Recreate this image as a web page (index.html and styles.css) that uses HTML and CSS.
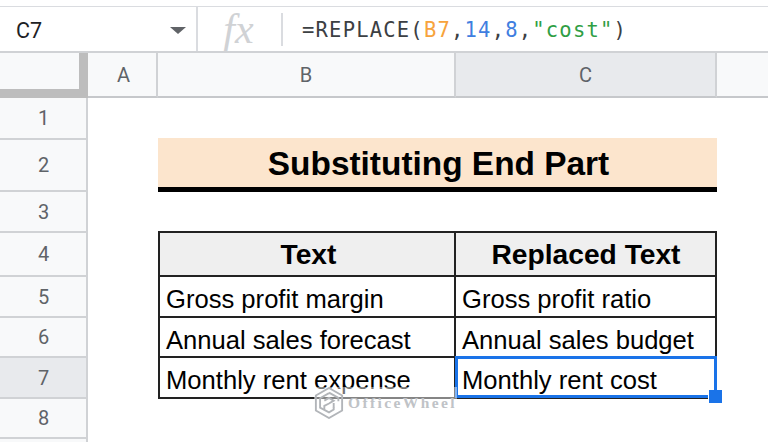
FILE: index.html
```html
<!DOCTYPE html>
<html lang="en">
<head>
<meta charset="utf-8">
<title>Substituting End Part</title>
<link rel="stylesheet" href="styles.css">
</head>
<body>
<div class="topstrip"></div>
<div class="fbar">
  <div class="namebox"><span class="cellname">C7</span><span class="caret"></span></div>
  <div class="fxwrap"><span class="fx">fx</span></div>
  <div class="formula">=REPLACE(<span class="c-ref">B7</span>,<span class="c-num">14</span>,<span class="c-num">8</span>,<span class="c-str">"cost"</span>)</div>
</div>
<div class="sheet">
  <div class="corner"></div>
  <div class="colh cola">A</div>
  <div class="colh">B</div>
  <div class="colh sel">C</div>
  <div class="colh end"></div>

  <div class="rowh">1</div><div class="blank wide"></div>
  <div class="rowh">2</div><div class="blank"></div><div class="title">Substituting End Part</div><div class="blank"></div>
  <div class="rowh">3</div><div class="blank wide"></div>
  <div class="rowh">4</div><div class="blank"></div><div class="cell head first">Text</div><div class="cell head">Replaced Text</div><div class="blank"></div>
  <div class="rowh">5</div><div class="blank"></div><div class="cell first">Gross profit margin</div><div class="cell">Gross profit ratio</div><div class="blank"></div>
  <div class="rowh">6</div><div class="blank"></div><div class="cell first">Annual sales forecast</div><div class="cell">Annual sales budget</div><div class="blank"></div>
  <div class="rowh sel">7</div><div class="blank"></div><div class="cell first">Monthly rent expense</div><div class="cell active">Monthly rent cost<span class="handle"></span></div><div class="blank"></div>
  <div class="rowh">8</div><div class="blank wide"></div>
  <div class="rowh last"></div><div class="blank wide"></div>
  <div class="watermark">
    <svg class="wm-logo" viewBox="0 0 32 34" width="30" height="32" fill="none" stroke="#b2b5b9" stroke-width="2">
      <path d="M16 1 30 9V25L16 33 2 25V9Z"/>
      <path d="M16 6 26 11.5V15M21 21.5V24L16 27 6.5 22V12L16 6.5"/>
      <path d="M11 14.500 16 11.500 21 14.500 16 17.500 11 20V24M21 17V22"/>
    </svg>
    <span class="wm-text">OfficeWheel</span>
  </div>
</div>
</body>
</html>
```
FILE: styles.css
```css
* { box-sizing: border-box; }
html, body { margin: 0; height: 442px; overflow: hidden; background: #fff; }
body { font-family: "Liberation Sans", Arial, sans-serif; color: #000; }

.topstrip { height: 7px; background: #fff; border-bottom: 1px solid #dadce0; }

.fbar { height: 46px; display: flex; align-items: center; background: #fff; border-bottom: 2px solid #d0d2d5; }
.namebox { width: 198px; height: 44px; display: flex; align-items: center; justify-content: space-between; padding: 2px 10px 0 16px; border-right: 2px solid #dadce0; }
.cellname { font: 21.500px Roboto, sans-serif; color: #202124; }
.caret { width: 0; height: 0; border-left: 8px solid transparent; border-right: 8px solid transparent; border-top: 7px solid #606367; margin-top: 1px; }
.fxwrap { width: 85px; height: 33px; display: flex; align-items: center; justify-content: center; border-right: 2px solid #dadce0; padding-right: 2px; }
.fx { font: italic 42px "Liberation Serif", serif; color: #d0d2d5; line-height: 30px; }
.formula { padding: 2px 0 0 19px; font: 20.500px "DejaVu Sans Mono", monospace; color: #3c4043; white-space: nowrap; letter-spacing: 1.200px; }
.c-ref { color: #f7a33c; }
.c-num { color: #3f7ee0; }
.c-str { color: #2f9e44; }

.sheet { position: relative; display: grid; grid-template-columns: 88px 70px 298px 261px 51px; grid-template-rows: 45px 42px 52px 41px 44px 41px 40px 41px 40px 3px; }

.corner { background: #f8f9fa; border-right: 9px solid #bdbdbd; border-bottom: 9px solid #bdbdbd; }
.colh { display: flex; align-items: center; justify-content: center; background: #f8f9fa; border-right: 2px solid #d0d2d5; border-bottom: 2px solid #c6c8cb; font: 20px Roboto, sans-serif; color: #5f6368; }
.colh.cola { padding-left: 3px; }
.colh.sel { background: #e8eaed; }
.colh.end { border-right: 0; }
.rowh { display: flex; align-items: center; justify-content: center; padding-left: 1px; background: #f8f9fa; border-right: 2px solid #d0d2d5; border-bottom: 2px solid #d0d2d5; font: 20px Roboto, sans-serif; color: #5f6368; }
.rowh.sel { background: #e8eaed; }
.rowh.last { border-bottom: 0; }
.blank { background: #fff; }
.wide { grid-column: 2 / 6; }

.title { grid-column: 3 / 5; display: flex; align-items: center; justify-content: center; margin-top: -2px; padding: 2px 0 0 2px; background: #fce5cd; border-bottom: 5px solid #000; font-weight: 700; font-size: 33.400px; }

.cell { display: flex; align-items: center; padding: 6px 7px 0 6px; border-right: 2px solid #222; border-bottom: 2px solid #222; font-size: 25.600px; white-space: nowrap; }
.cell.first { border-left: 2px solid #222; }
.cell.head { justify-content: center; margin-top: -2px; padding-top: 0; padding-left: 8px; background: #efefef; font-weight: 700; font-size: 28.200px; border-top: 2px solid #222; }
.cell.head.first { padding-left: 10px; }

.cell.active { position: relative; }
.cell.active::before { content: ""; position: absolute; left: -1px; top: -2px; right: -2px; bottom: -1px; border: 3px solid #1a73e8; }
.handle { position: absolute; right: -7px; bottom: -7px; width: 14px; height: 14px; background: #1a73e8; border: 1px solid #fff; border-right: 0; border-top: 0; }

.watermark { position: absolute; left: 314px; top: 334px; display: flex; align-items: center; gap: 4px; background: rgba(255,255,255,.45); }
.wm-text { font: 700 15.500px "Liberation Serif", serif; letter-spacing: 2.400px; color: #c0c3c7; }
```
